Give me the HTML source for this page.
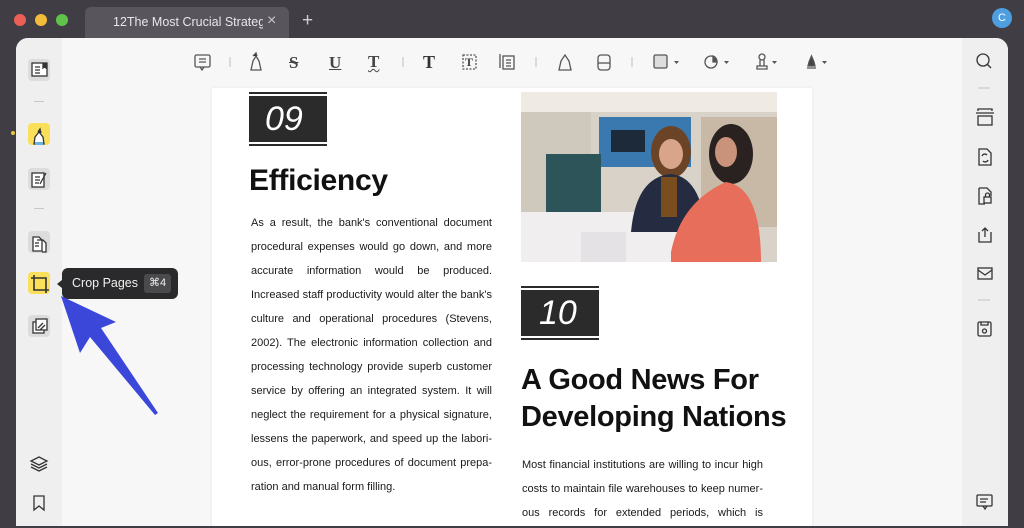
<!DOCTYPE html>
<html><head><meta charset="utf-8"><style>
*{margin:0;padding:0;box-sizing:border-box}
body{width:1024px;height:528px;overflow:hidden;background:#413d44;font-family:"Liberation Sans",sans-serif;position:relative}
.abs{position:absolute}
#content{left:16px;top:38px;width:992px;height:488px;background:#f7f7f8;border-radius:12px 12px 0 0;overflow:hidden}
#lsb{left:0;top:0;width:46px;height:490px;background:#efeff0}
#rsb{left:946px;top:0;width:46px;height:490px;background:#efeff0}
#page{left:196px;top:50px;width:600px;height:450px;background:#fff;box-shadow:0 0 3px rgba(0,0,0,.08)}
.ic{position:absolute;width:22px;height:22px;border-radius:4px}
.gray{background:#dcdcdd}
.yel{background:#f9df5a}
.sep{position:absolute;width:10px;height:1px;background:#c8c8c8}
svg{position:absolute;overflow:visible}
.txt{position:absolute;font-size:11px;color:#1a1a1a;line-height:24px;width:241px}
.txt div{text-align:justify;text-align-last:justify;height:24px;white-space:nowrap}
.txt div.l{text-align-last:left}
h1{position:absolute;font-weight:bold;color:#111;letter-spacing:-0.3px}
</style></head><body>
<div class="abs" style="left:14px;top:14px;width:12px;height:12px;border-radius:50%;background:#ec5f56"></div>
<div class="abs" style="left:35px;top:14px;width:12px;height:12px;border-radius:50%;background:#f3bb3a"></div>
<div class="abs" style="left:56px;top:14px;width:12px;height:12px;border-radius:50%;background:#5fc34b"></div>
<div class="abs" style="left:85px;top:7px;width:204px;height:31px;background:#59555c;border-radius:6px 6px 0 0"></div>
<div class="abs" style="left:113px;top:15px;font-size:12.5px;color:#e8e6ea;white-space:nowrap;width:150px;overflow:hidden">12The Most Crucial Strategies</div>
<div class="abs" style="left:267px;top:12px;font-size:16px;color:#c8c6ca">×</div>
<div class="abs" style="left:302px;top:10px;font-size:19px;color:#d0ced2">+</div>
<div class="abs" style="left:992px;top:8px;width:20px;height:20px;border-radius:50%;background:#4d9fe2;color:#fff;font-size:11px;text-align:center;line-height:20px">C</div>
<div class="abs" style="left:11px;top:131px;width:4px;height:4px;border-radius:50%;background:#e9c63c"></div>

<div id="content" class="abs">
 <div id="lsb" class="abs"></div>
 <div id="rsb" class="abs"></div>
 <div id="page" class="abs">
  <div class="abs" style="left:37px;top:4px;width:78px;height:2px;background:#2b2b2b"></div>
  <div class="abs" style="left:37px;top:8px;width:78px;height:46px;background:#2b2b2b;color:#fff;font-style:italic;font-size:34px;line-height:46px;padding-left:16px">09</div>
  <div class="abs" style="left:37px;top:56px;width:78px;height:2px;background:#2b2b2b"></div>
  <h1 style="left:37px;top:76px;font-size:30px">Efficiency</h1>
  <div class="txt" style="left:39px;top:123px">
   <div>As a result, the bank's conventional document</div>
   <div>procedural expenses would go down, and more</div>
   <div>accurate information would be produced.</div>
   <div>Increased staff productivity would alter the bank's</div>
   <div>culture and operational procedures (Stevens,</div>
   <div>2002). The electronic information collection and</div>
   <div>processing technology provide superb customer</div>
   <div>service by offering an integrated system. It will</div>
   <div>neglect the requirement for a physical signature,</div>
   <div>lessens the paperwork, and speed up the labori-</div>
   <div>ous, error-prone procedures of document prepa-</div>
   <div class="l">ration and manual form filling.</div>
  </div>
  <svg style="left:309px;top:4px" width="256" height="170" viewBox="0 0 256 170">
   <rect width="256" height="170" fill="#d8d2c8"/>
   <rect x="0" y="0" width="256" height="20" fill="#efebe4"/>
   <rect x="0" y="20" width="70" height="120" fill="#cfc8bc"/>
   <rect x="78" y="25" width="92" height="50" fill="#3a78b0"/>
   <rect x="90" y="38" width="34" height="22" fill="#1d2a3a"/>
   <rect x="180" y="25" width="76" height="110" fill="#c7b9a6"/>
   <rect x="25" y="62" width="55" height="72" fill="#2d5458"/>
   <rect x="0" y="120" width="180" height="50" fill="#f0eeee"/>
   <ellipse cx="150" cy="60" rx="20" ry="26" fill="#6b4428"/>
   <ellipse cx="150" cy="62" rx="12" ry="15" fill="#d9a58a"/>
   <path d="M110 140 Q115 85 150 82 Q180 85 185 140 Z" fill="#252c42"/>
   <rect x="140" y="85" width="16" height="40" fill="#7a4d1f"/>
   <ellipse cx="210" cy="62" rx="22" ry="30" fill="#2a2220"/>
   <ellipse cx="205" cy="60" rx="11" ry="15" fill="#c9927a"/>
   <path d="M150 160 Q160 110 205 90 Q240 95 240 170 L150 170 Z" fill="#e86e5c"/>
   <rect x="60" y="140" width="45" height="30" fill="#e4e2e4"/>
  </svg>
  <div class="abs" style="left:309px;top:198px;width:78px;height:2px;background:#2b2b2b"></div>
  <div class="abs" style="left:309px;top:202px;width:78px;height:46px;background:#2b2b2b;color:#fff;font-style:italic;font-size:34px;line-height:46px;padding-left:18px">10</div>
  <div class="abs" style="left:309px;top:250px;width:78px;height:2px;background:#2b2b2b"></div>
  <h1 style="left:309px;top:274px;font-size:29px;line-height:37px;white-space:nowrap">A Good News For<br>Developing Nations</h1>
  <div class="txt" style="left:310px;top:365px;width:241px">
   <div>Most financial institutions are willing to incur high</div>
   <div>costs to maintain file warehouses to keep numer-</div>
   <div>ous records for extended periods, which is</div>
  </div>
 </div>
</div>

<svg style="left:0;top:0" width="1024" height="528" fill="none" stroke="#555" stroke-width="1.3">
 <rect x="195" y="55" width="15" height="12" rx="1.5"/><path d="M199 59h7M199 62h7M200 67l2 3 2-3"/>
 <path d="M230 57v10" stroke="#ccc"/>
 <path d="M251 70l2-9 3-5 3 5 2 9Z"/><path d="M253 56l3-3 1 3" fill="#333"/>
 <path d="M403 57v10M536 57v10M632 57v10" stroke="#ccc"/>
 <path d="M559 70l2-9 4-6 4 6 2 9Z"/>
 <rect x="598" y="55" width="12" height="15" rx="3"/><path d="M598 63h12"/>
 <rect x="654" y="55" width="13" height="13" rx="1.5" fill="#ddd"/><path d="M674 61h5l-2.5 3Z" fill="#555" stroke="none"/>
 <circle cx="711" cy="62" r="6"/><path d="M713 56a6 6 0 0 1 4 6h-4Z" fill="#555"/><path d="M724 61h5l-2.5 3Z" fill="#555" stroke="none"/>
 <circle cx="762" cy="57" r="3"/><path d="M757 66h10v3h-10Z M760 60v6M764 60v6"/><path d="M772 61h5l-2.5 3Z" fill="#555" stroke="none"/>
 <path d="M807 68h9M808 66h7l-1-4-2.5-6-2.5 6Z" fill="#444"/><path d="M822 61h5l-2.5 3Z" fill="#555" stroke="none"/>
 <rect x="463" y="55" width="13" height="14" stroke-dasharray="2 1.5"/>
 <rect x="503" y="56" width="11" height="13"/><path d="M500 54v14M506 60h5M506 63h5M506 66h5"/>
</svg>
<div class="abs" style="left:289px;top:53px;font-size:17px;font-weight:bold;color:#444;font-family:'Liberation Serif',serif;text-decoration:line-through">S</div>
<div class="abs" style="left:329px;top:53px;font-size:17px;font-weight:bold;color:#444;font-family:'Liberation Serif',serif;text-decoration:underline">U</div>
<div class="abs" style="left:368px;top:52px;font-size:17px;font-weight:bold;color:#444;font-family:'Liberation Serif',serif;text-decoration:underline wavy;text-decoration-thickness:1px">T</div>
<div class="abs" style="left:423px;top:52px;font-size:18px;font-weight:bold;color:#333;font-family:'Liberation Serif',serif">T</div>
<div class="abs" style="left:465px;top:55px;font-size:12px;font-weight:bold;color:#444;font-family:'Liberation Serif',serif">T</div>

<div class="ic gray" style="left:28px;top:59px"></div>
<div class="sep" style="left:34px;top:101px"></div>
<div class="ic yel" style="left:28px;top:123px"></div>
<div class="ic gray" style="left:28px;top:168px"></div>
<div class="sep" style="left:34px;top:208px"></div>
<div class="ic gray" style="left:28px;top:231px"></div>
<div class="ic yel" style="left:28px;top:272px"></div>
<div class="ic gray" style="left:28px;top:315px"></div>
<svg style="left:0;top:0" width="1024" height="528" fill="none" stroke="#333" stroke-width="1.3">
 <rect x="32" y="63" width="15" height="13" fill="#fff"/><path d="M35 67h5M35 70h5M35 73h5"/><path d="M43 63v5l1.5-1 1.5 1v-5" fill="#333"/>
 <path d="M34 144l1-7 4-5 4 5 1 7Z" fill="#fff"/><path d="M35 142h8v3h-8Z" fill="#6cb4e0" stroke="none"/><path d="M38 132l2-3 1 4" fill="#333"/>
 <rect x="32" y="173" width="12" height="14" fill="#fff"/><path d="M35 177h5M35 180h5M35 183h4M40 184l6-11" />
 <path d="M33 237h6l3 3v11h-9Z M37 240h6l3 3v9h-4" fill="#fff"/><path d="M35 243h4M35 246h4"/>
 <path d="M34 275v15h15M31 278h15v15" stroke-width="1.6"/>
 <rect x="33" y="322" width="11" height="11" fill="#fff"/><rect x="36" y="319" width="11" height="11" fill="#fff"/><path d="M38 328l5-5M40 330l5-5"/>
 <path d="M39 457l-8 4 8 4 8-4Z M31 464l8 4 8-4 M31 467l8 4 8-4"/>
 <path d="M34 496v14l5-4 5 4v-14Z"/>
 <circle cx="983" cy="60" r="6"/><path d="M987 64l4 4"/>
 <path d="M978 88h12" stroke="#ccc"/>
 <path d="M976 113h18M978 111v-2h14v2"/><rect x="978" y="116" width="14" height="9"/>
 <path d="M979 149h8l4 4v12h-12Z"/><path d="M982 156a3 3 0 0 1 5-1M988 160a3 3 0 0 1-5 1"/>
 <path d="M979 188h8l4 4v4M985 204h-6v-16"/><rect x="984" y="197" width="7" height="6"/><path d="M985.5 197v-2a2 2 0 0 1 4 0v2"/>
 <path d="M979 232v10h12v-10M985 228v9M982 231l3-3 3 3"/>
 <rect x="978" y="268" width="14" height="11"/><path d="M978 270l7 5 7-5"/>
 <path d="M978 300h12" stroke="#ccc"/>
 <rect x="978" y="322" width="13" height="14" rx="1.5"/><circle cx="984.5" cy="331" r="2"/><path d="M981 322v3h7v-3"/>
 <rect x="977" y="495" width="15" height="11" rx="1"/><path d="M980 499h8M980 502h6M983 506l2 3 2-3"/>
</svg>

<div class="abs" style="left:62px;top:268px;width:116px;height:31px;background:#2a2a2c;border-radius:6px"></div>
<div class="abs" style="left:57px;top:280px;width:0;height:0;border-top:4px solid transparent;border-bottom:4px solid transparent;border-right:5px solid #2a2a2c"></div>
<div class="abs" style="left:72px;top:276px;font-size:12.5px;color:#f0f0f0">Crop Pages</div>
<div class="abs" style="left:144px;top:274px;width:27px;height:19px;background:#4a4a4c;border-radius:3px;color:#eee;font-size:11px;line-height:19px;text-align:center">⌘4</div>

<svg style="left:0;top:0" width="1024" height="528"><path d="M61 296 L116 322 L101 328 L158 413 L155 415 L90 337 L80 353 Z" fill="#3a47d8"/></svg>
</body></html>
